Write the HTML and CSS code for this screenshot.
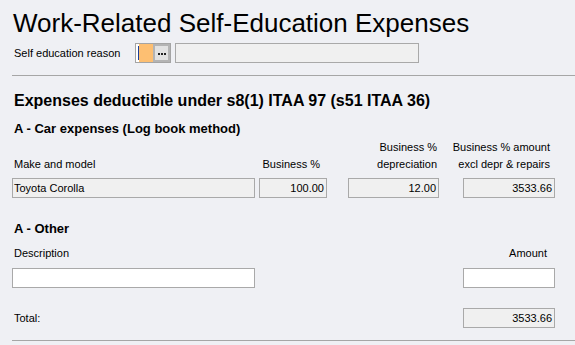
FILE: index.html
```html
<!DOCTYPE html>
<html>
<head>
<meta charset="utf-8">
<title>Work-Related Self-Education Expenses</title>
<link rel="stylesheet" href="styles.css">
</head>
<body>
<div class="page">
  <h1 class="title">Work-Related Self-Education Expenses</h1>

  <div class="reason-row">
    <span class="reason-label">Self education reason</span>
    <div class="picker">
      <span class="picker-field"><span class="caret"></span><span class="swatch"></span></span>
      <span class="picker-btn"><span class="dot"></span><span class="dot"></span><span class="dot"></span></span>
    </div>
    <div class="field readonly reason-text"></div>
  </div>

  <div class="rule rule-top"></div>

  <h2 class="section">Expenses deductible under s8(1) ITAA 97 (s51 ITAA 36)</h2>

  <h3 class="sub sub-car">A - Car expenses (Log book method)</h3>
  <div class="grid car-grid">
    <div class="hdr hdr-model">Make and model</div>
    <div class="hdr hdr-pct">Business %</div>
    <div class="hdr hdr-dep">Business %<br>depreciation</div>
    <div class="hdr hdr-amt">Business % amount<br>excl depr &amp; repairs</div>

    <div class="field readonly w-model">Toyota Corolla</div>
    <div class="field readonly num w-pct">100.00</div>
    <div class="field readonly num w-dep">12.00</div>
    <div class="field readonly num w-amt">3533.66</div>
  </div>

  <h3 class="sub sub-other">A - Other</h3>
  <div class="grid other-grid">
    <div class="hdr hdr-desc">Description</div>
    <div class="hdr hdr-amount">Amount</div>
    <div class="field editable w-desc"></div>
    <div class="field editable num w-amount"></div>
  </div>

  <div class="grid total-grid">
    <div class="total-label">Total:</div>
    <div class="field readonly num w-total">3533.66</div>
  </div>

  <div class="rule rule-bottom"></div>
</div>
</body>
</html>
```

FILE: styles.css
```css
html, body {
  margin: 0;
  padding: 0;
  background: #eff0f4;
}

body {
  font-family: "Liberation Sans", Arial, sans-serif;
  font-size: 11px;
  color: #000;
  width: 575px;
  height: 345px;
  overflow: hidden;
}

.page {
  padding-left: 12px;
}

.title {
  margin: 0;
  padding: 8px 0 0 1px;
  font-size: 26px;
  line-height: 30px;
  font-weight: normal;
}

.reason-row {
  display: flex;
  align-items: center;
  margin-top: 5px;
  height: 20px;
}

.reason-label {
  box-sizing: border-box;
  width: 123px;
  padding-left: 2px;
  line-height: 17px;
}

.picker {
  box-sizing: border-box;
  display: flex;
  width: 36px;
  height: 20px;
  border: 1px solid #a4a4a4;
  background: #fff;
}

.picker-field {
  display: flex;
  align-items: stretch;
  width: 17px;
  padding: 0 0 0 2px;
  box-sizing: border-box;
}

.caret {
  width: 1px;
  margin: 2px 0;
  background: #1b3f9a;
}

.swatch {
  flex: 1;
  background: #fdbf72;
}

.picker-btn {
  box-sizing: border-box;
  display: flex;
  justify-content: center;
  align-items: flex-end;
  gap: 1px;
  width: 17px;
  height: 18px;
  padding-bottom: 5px;
  border: 2px solid #b4b4b4;
  background: #e2e2e2;
}

.dot {
  width: 2px;
  height: 2px;
  background: #222;
}

.field {
  box-sizing: border-box;
  height: 20px;
  border: 1px solid #a9a9a9;
  line-height: 18px;
  padding: 0 2px 0 1px;
  white-space: nowrap;
}

.readonly {
  background: #f0f0f0;
}

.editable {
  background: #fff;
}

.num {
  text-align: right;
}

.reason-text {
  width: 244px;
  margin-left: 4px;
}

.rule {
  height: 1px;
  background: #a6a6a6;
}

.rule-top {
  margin-top: 12px;
}

.rule-bottom {
  margin-top: 12px;
}

.section {
  margin: 15px 0 0 2px;
  font-size: 16px;
  line-height: 20px;
  font-weight: bold;
}

.sub {
  margin: 0 0 0 2px;
  font-size: 13px;
  line-height: 16px;
  font-weight: bold;
}

.sub-car {
  margin-top: 10px;
}

.sub-other {
  margin-top: 23px;
}

.grid {
  display: grid;
  width: 543px;
}

.car-grid {
  grid-template-columns: 243px 72px 112px 116px;
  grid-template-rows: auto 20px;
  row-gap: 5px;
  margin-top: 2px;
  align-items: end;
}

.hdr {
  line-height: 17px;
}

.hdr-model {
  padding-left: 2px;
}

.hdr-pct {
  text-align: right;
  padding-right: 7px;
}

.hdr-dep {
  text-align: right;
  padding-right: 2px;
}

.hdr-amt {
  text-align: right;
  padding-right: 5px;
}

.w-model {
  width: 243px;
}

.w-pct {
  width: 68px;
  justify-self: end;
}

.w-dep {
  width: 91px;
  justify-self: end;
}

.w-amt, .w-amount, .w-total {
  width: 92px;
  justify-self: end;
}

.other-grid {
  grid-template-columns: 243px 1fr 92px;
  grid-template-areas:
    "desc . amount"
    "descbox . amountbox";
  row-gap: 6px;
  margin-top: 8px;
}

.hdr-desc {
  grid-area: desc;
  padding-left: 2px;
}

.hdr-amount {
  grid-area: amount;
  text-align: right;
  padding-right: 8px;
}

.w-desc {
  grid-area: descbox;
  width: 243px;
}

.w-amount {
  grid-area: amountbox;
}

.total-grid {
  grid-template-columns: 243px 1fr 92px;
  grid-template-areas: "label . box";
  align-items: center;
  margin-top: 20px;
}

.total-label {
  grid-area: label;
  padding-left: 2px;
  line-height: 17px;
}

.w-total {
  grid-area: box;
}
```
